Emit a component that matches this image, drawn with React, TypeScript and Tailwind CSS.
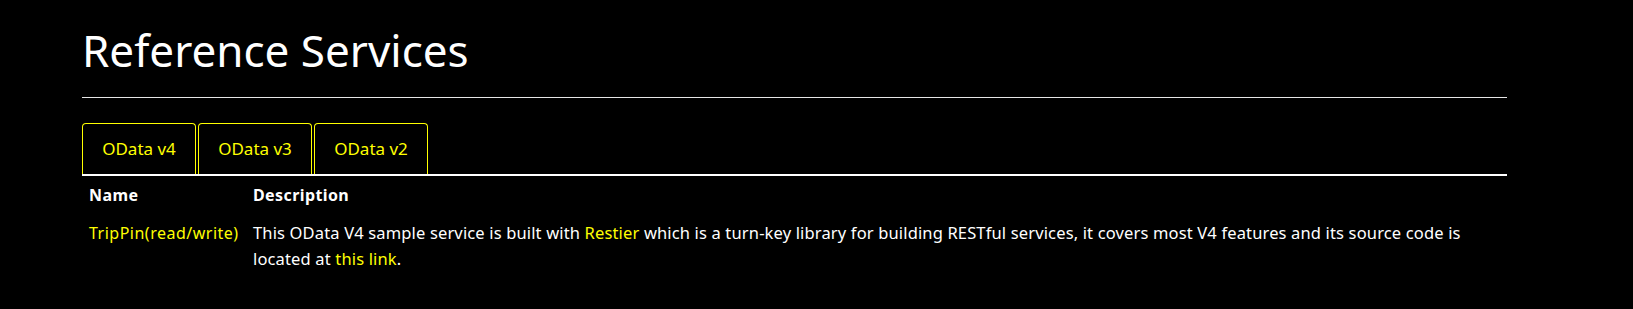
import React from "react";

export default function App() {
  const font = { fontFamily: '"Noto Sans", "Open Sans", sans-serif' };
  return (
    <div className="min-h-[309px] w-full bg-black text-white" style={font}>
      <div className="ml-[82px] w-[1425px] pt-[21px]">
        <h1 className="text-[44px] leading-[58px] font-normal text-white">Reference Services</h1>
        <div className="mt-[18px] h-px bg-[#e6e6e6]" />
        <div className="mt-[25px] flex border-b-2 border-white">
          {["OData v4", "OData v3", "OData v2"].map((t) => (
            <div
              key={t}
              className="mr-[2px] flex h-[51px] w-[114px] items-center justify-center rounded-t-[4px] border border-b-0 border-[#ffff00] text-[17px] text-[#ffff00]"
            >
              {t}
            </div>
          ))}
        </div>
        <div className="mt-[6px] flex text-[16px] font-bold leading-[26px] tracking-[0.4px]">
          <div className="w-[171px] pl-[7px]">Name</div>
          <div className="flex-1">Description</div>
        </div>
        <div className="mt-[12px] flex text-[16.5px] leading-[26px]">
          <div className="w-[171px] pl-[7px] text-[16px] tracking-[0.5px] text-[#ffff00]">TripPin(read/write)</div>
          <div className="flex-1 pr-[30px] tracking-[0.15px]">
            This OData V4 sample service is built with <span className="text-[#ffff00]">Restier</span> which is a turn-key library for building RESTful services, it covers most V4 features and its source code is located at <span className="text-[#ffff00]">this link</span>.
          </div>
        </div>
      </div>
    </div>
  );
}
